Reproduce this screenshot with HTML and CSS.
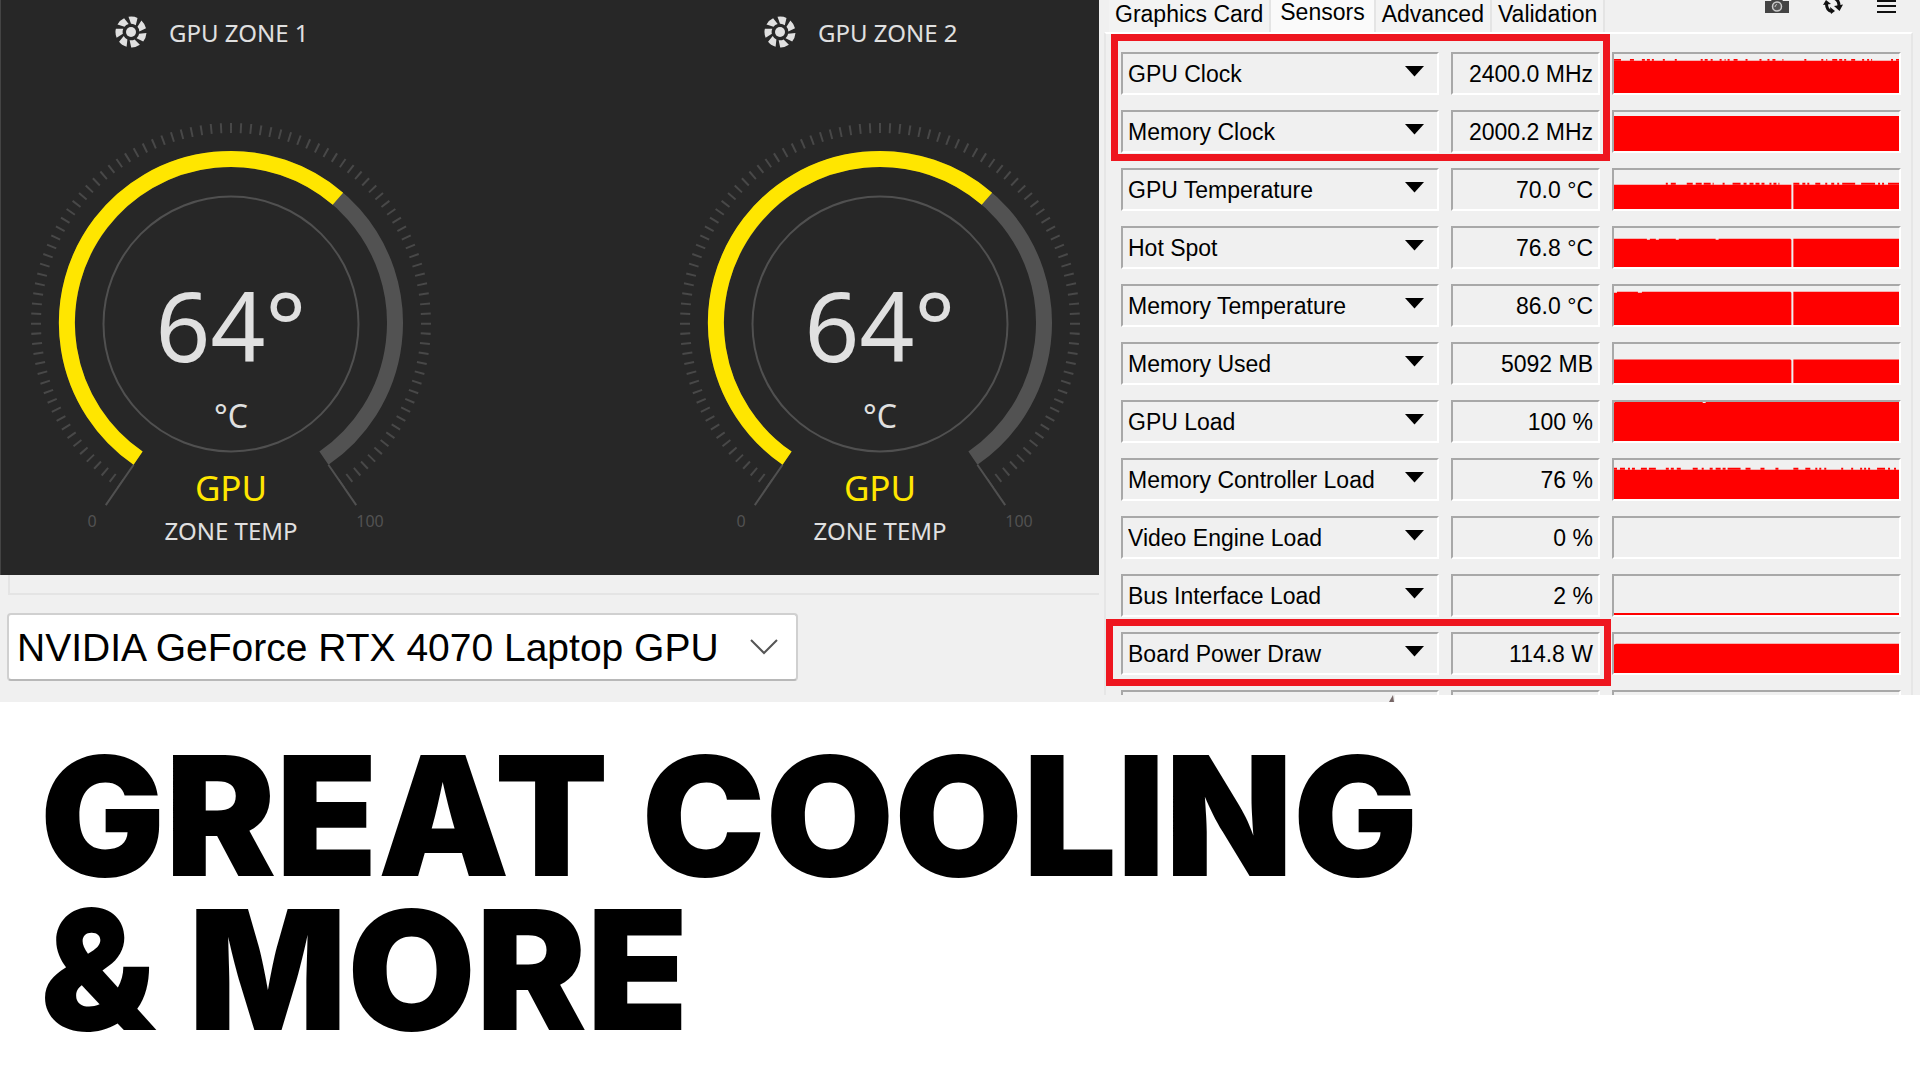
FILE: index.html
```html
<!DOCTYPE html>
<html lang="en">
<head>
<meta charset="utf-8">
<title>Great cooling &amp; more</title>
<link rel="stylesheet" href="styles.css">
</head>
<body>
<svg class="defs" aria-hidden="true">
  <symbol id="caret" viewBox="0 0 19 11"><path d="M0 0H19L9.500 10.500Z"/></symbol>
  <symbol id="fan" viewBox="-16 -16 32 32">
    <circle r="5"/>
    <g id="blades">
      <path id="blade" d="M-2.500 -15.300Q3 -16 6.500 -14L4.800 -6.800Q2.500 -8.500 0 -8.300Z"/>
      <use href="#blade" transform="rotate(51.430)"/>
      <use href="#blade" transform="rotate(102.860)"/>
      <use href="#blade" transform="rotate(154.290)"/>
      <use href="#blade" transform="rotate(205.710)"/>
      <use href="#blade" transform="rotate(257.140)"/>
      <use href="#blade" transform="rotate(308.570)"/>
    </g>
  </symbol>
  <symbol id="dial" viewBox="-231 -230 462 460">
    <path class="ticks" pathLength="1000" d="M-110.400 160.700A195 195 0 1 1 110.400 160.700"/>
    <path class="ends" d="M-97.400 141.700L-125.200 182.100M97.400 141.700L125.200 182.100"/>
    <path class="track" d="M-92.900 135.200A164 164 0 1 1 92.900 135.200"/>
    <path class="fill" d="M-92.900 135.200A164 164 0 1 1 106.900 -124.300"/>
    <circle class="inner" cy="1" r="127.500"/>
  </symbol>
</svg>

<main>
  <section class="captures">
    <div class="left">
      <div class="zones">
        <article class="zone">
          <h2><svg class="fan" aria-hidden="true"><use href="#fan"/></svg>GPU ZONE 1</h2>
          <svg class="gauge" viewBox="-231 -230 462 460">
            <use href="#dial" x="-231" y="-230" width="462" height="460"/>
            <text class="reading" y="39">64°</text>
            <text class="unit" y="105">°C</text>
            <text class="name" y="178">GPU</text>
            <text class="caption" y="217">ZONE TEMP</text>
            <text class="scale" x="-139" y="204">0</text>
            <text class="scale" x="139" y="204">100</text>
          </svg>
        </article>
        <article class="zone">
          <h2><svg class="fan" aria-hidden="true"><use href="#fan"/></svg>GPU ZONE 2</h2>
          <svg class="gauge" viewBox="-231 -230 462 460">
            <use href="#dial" x="-231" y="-230" width="462" height="460"/>
            <text class="reading" y="39">64°</text>
            <text class="unit" y="105">°C</text>
            <text class="name" y="178">GPU</text>
            <text class="caption" y="217">ZONE TEMP</text>
            <text class="scale" x="-139" y="204">0</text>
            <text class="scale" x="139" y="204">100</text>
          </svg>
        </article>
      </div>
      <div class="picker">
        <div class="group-edge"></div>
        <div class="device">
          <select aria-label="Graphics card"><option>NVIDIA GeForce RTX 4070 Laptop GPU</option></select>
          <svg class="chevron" viewBox="0 0 28 16" aria-hidden="true"><path d="M1 1L14 14L27 1"/></svg>
        </div>
      </div>
    </div>

    <div class="right">
      <div class="panel">
        <header>
          <nav>
            <button class="tab">Graphics Card</button>
            <button class="tab active">Sensors</button>
            <button class="tab">Advanced</button>
            <button class="tab">Validation</button>
          </nav>
          <div class="tools">
            <button aria-label="Screenshot"><svg width="24" height="14" viewBox="0 0 24 14"><path fill="#444" d="M0 1H6L8 -2H16L18 1H24V13H0Z"/><circle cx="12" cy="6.500" r="4.500" fill="#555" stroke="#ccc" stroke-width="1.500"/><path d="M10 7A2.500 2.500 0 0 1 12 4.500" fill="none" stroke="#ccc"/></svg></button>
            <button aria-label="Refresh"><svg width="20" height="14" viewBox="0 0 20 14"><g fill="none" stroke="#111" stroke-width="3"><path d="M3.500 4Q3.500 10.500 9 11.500"/><path d="M16 6Q16 -1 10 -2"/></g><path fill="#111" d="M0 5L3 0L8 4ZM11 6L20 4.500L16.500 11ZM7 7L12 11L8 14Z"/></svg></button>
            <button aria-label="Menu"><svg width="19" height="14" viewBox="0 0 19 14"><path stroke="#111" stroke-width="2" d="M0 1H19M0 6H19M0 12H19"/></svg></button>
          </div>
        </header>
        <div class="sensors">
          <div class="group marked clocks">
            <div class="row">
              <div class="field"><select aria-label="Sensor 1"><option>GPU Clock</option></select><svg class="caret"><use href="#caret"/></svg></div>
              <output>2400.0 MHz</output>
              <svg class="graph" viewBox="0 0 286 40" preserveAspectRatio="none"><path d="M0 7H286V40H0Z"/><path class="noise" d="M0 6H7M16 6H20M28 6H31M33 6H36M38 6H40M49 6H51M61 6H63M87 6H89M91 6H94M97 6H99M106 6H108M111 6H112M114 6H116M120 6H124M132 6H134M146 6H148M154 6H156M159 6H162M169 6H170M191 6H193M208 6H210M213 6H214M219 6H224M226 6H229M231 6H233M238 6H242M249 6H251M254 6H256M258 6H259M278 6H280M283 6H286"/></svg>
            </div>
            <div class="row">
              <div class="field"><select aria-label="Sensor 2"><option>Memory Clock</option></select><svg class="caret"><use href="#caret"/></svg></div>
              <output>2000.2 MHz</output>
              <svg class="graph" viewBox="0 0 286 40" preserveAspectRatio="none"><path d="M0 4H286V40H0Z"/></svg>
            </div>
          </div>
          <div class="row">
            <div class="field"><select aria-label="Sensor 3"><option>GPU Temperature</option></select><svg class="caret"><use href="#caret"/></svg></div>
            <output>70.0 °C</output>
            <svg class="graph" viewBox="0 0 286 40" preserveAspectRatio="none"><path d="M0 15H178V40H0ZM180 15H286V40H180Z"/><path class="noise" d="M52 14H54M57 14H62M73 14H79M82 14H88M90 14H97M99 14H100M109 14H111M119 14H127M130 14H133M136 14H140M142 14H146M148 14H151M156 14H158M160 14H163M165 14H166M180 14H186M189 14H192M194 14H196M202 14H207M212 14H214M218 14H221M224 14H226M229 14H242M248 14H262M265 14H267M269 14H271M275 14H286"/></svg>
          </div>
          <div class="row">
            <div class="field"><select aria-label="Sensor 4"><option>Hot Spot</option></select><svg class="caret"><use href="#caret"/></svg></div>
            <output>76.8 °C</output>
            <svg class="graph" viewBox="0 0 286 40" preserveAspectRatio="none"><path d="M0 11H33V12H36V11H42V12H45V11H62V12H65V11H102V12H105V11H177L178 12V40H0ZM180 11H286V40H180Z"/></svg>
          </div>
          <div class="row">
            <div class="field"><select aria-label="Sensor 5"><option>Memory Temperature</option></select><svg class="caret"><use href="#caret"/></svg></div>
            <output>86.0 °C</output>
            <svg class="graph" viewBox="0 0 286 40" preserveAspectRatio="none"><path d="M0 7H3V6H24V7H28V6H177L178 7V40H0ZM180 6H286V40H180Z"/></svg>
          </div>
          <div class="row">
            <div class="field"><select aria-label="Sensor 6"><option>Memory Used</option></select><svg class="caret"><use href="#caret"/></svg></div>
            <output>5092 MB</output>
            <svg class="graph" viewBox="0 0 286 40" preserveAspectRatio="none"><path d="M0 16H177L178 17V40H0ZM180 16H286V40H180Z"/></svg>
          </div>
          <div class="row">
            <div class="field"><select aria-label="Sensor 7"><option>GPU Load</option></select><svg class="caret"><use href="#caret"/></svg></div>
            <output>100 %</output>
            <svg class="graph" viewBox="0 0 286 40" preserveAspectRatio="none"><path d="M0 1L1 0H89V1H92V0H286V40H0Z"/></svg>
          </div>
          <div class="row">
            <div class="field"><select aria-label="Sensor 8"><option>Memory Controller Load</option></select><svg class="caret"><use href="#caret"/></svg></div>
            <output>76 %</output>
            <svg class="graph" viewBox="0 0 286 40" preserveAspectRatio="none"><path d="M0 10H286V40H0Z"/><path class="noise" d="M0 9H3M6 9H11M14 9H16M18 9H21M27 9H33M35 9H42M52 9H55M57 9H60M63 9H67M79 9H84M88 9H90M96 9H99M102 9H107M109 9H112M114 9H127M132 9H137M147 9H151M162 9H165M180 9H185M192 9H197M202 9H204M206 9H208M211 9H213M228 9H230M238 9H240M247 9H249M251 9H253M255 9H257M264 9H272M275 9H277M281 9H283"/></svg>
          </div>
          <div class="row">
            <div class="field"><select aria-label="Sensor 9"><option>Video Engine Load</option></select><svg class="caret"><use href="#caret"/></svg></div>
            <output>0 %</output>
            <svg class="graph" viewBox="0 0 286 40" preserveAspectRatio="none"></svg>
          </div>
          <div class="row">
            <div class="field"><select aria-label="Sensor 10"><option>Bus Interface Load</option></select><svg class="caret"><use href="#caret"/></svg></div>
            <output>2 %</output>
            <svg class="graph" viewBox="0 0 286 40" preserveAspectRatio="none"><path d="M0 38H286V40H0Z"/></svg>
          </div>
          <div class="group marked power">
            <div class="row">
              <div class="field"><select aria-label="Sensor 11"><option>Board Power Draw</option></select><svg class="caret"><use href="#caret"/></svg></div>
              <output>114.8 W</output>
              <svg class="graph" viewBox="0 0 286 40" preserveAspectRatio="none"><path d="M0 11L2 10H286V40H0Z"/></svg>
            </div>
          </div>
          <div class="row">
            <div class="field"></div>
            <output></output>
            <svg class="graph"></svg>
          </div>
        </div>
      </div>
      <div class="under"><svg width="6" height="7" viewBox="0 0 6 7" aria-hidden="true"><path fill="#766" d="M0 7L4 0L5 7Z"/></svg></div>
    </div>
  </section>
  <h1>GREAT COOLING<br>&amp; MORE</h1>
</main>
</body>
</html>
```

FILE: styles.css
```css
*,
*::after {
  box-sizing: border-box;
}

body {
  margin: 0;
  background: #fff;
  color: #000;
  font-family: "Liberation Sans", Arial, sans-serif;
  font-size: 23px;
  overflow-x: hidden;
}

button,
select {
  font: inherit;
  color: inherit;
  border: 0;
  border-radius: 0;
  background: none;
  padding: 0;
  margin: 0;
  appearance: none;
}

.defs {
  display: block;
  width: 0;
  height: 0;
}

.captures {
  display: grid;
  grid-template-columns: 1099fr 821fr;
}

.left,
.right {
  display: flex;
  flex-direction: column;
  min-width: 0;
}

/* Fan zones */
.zones {
  display: grid;
  grid-template-columns: minmax(0, 649fr) minmax(0, 450fr);
  height: 575px;
  background: #272727;
  box-shadow: inset 1px 0 #444;
  overflow: hidden;
}

.zone {
  width: 462px;
  color: #e0e0e0;
  font-family: "Noto Sans", sans-serif;
}

.zone h2 {
  display: flex;
  align-items: center;
  gap: 22px;
  height: 64px;
  margin: 0;
  padding-left: 115px;
  font-size: 24px;
  font-weight: 400;
}

.fan {
  width: 32px;
  height: 32px;
  fill: #e0e0e0;
}

.gauge {
  display: block;
  width: 100%;
  margin-top: 29px;
}

.ticks,
.ends,
.track,
.fill,
.inner {
  fill: none;
}

.ticks {
  stroke: #484848;
  stroke-width: 10;
  stroke-dasharray: 2 8;
  stroke-dashoffset: 1;
}

.ends,
.inner {
  stroke: #505050;
  stroke-width: 2;
}

.track {
  stroke: #525252;
  stroke-width: 16;
}

.fill {
  stroke: #ffe600;
  stroke-width: 16;
}

.gauge text {
  text-anchor: middle;
  fill: #e0e0e0;
}

.gauge .reading {
  font-size: 96px;
}

.gauge .unit {
  font-size: 32px;
}

.gauge .name {
  font-size: 35px;
  fill: #ffe600;
}

.gauge .caption {
  font-size: 24px;
}

.gauge .scale {
  font-size: 16px;
  fill: #525252;
}

/* Device picker */
.picker {
  height: 127px;
  background: #f0f0f0;
}

.group-edge {
  height: 20px;
  margin-left: 8px;
  border-left: 2px solid #e4e4e4;
  border-bottom: 2px solid #e4e4e4;
}

.device {
  position: relative;
  width: 72%;
  height: 68px;
  margin: 18px 0 0 7px;
  background: #fff;
  border: 2px solid #d0d0d0;
  border-bottom-color: #b8b8b8;
  border-radius: 4px;
}

.device select {
  width: 100%;
  height: 100%;
  padding: 0 0 0 8px;
  font-size: 39px;
}

.chevron {
  position: absolute;
  top: 24px;
  right: 18px;
  width: 28px;
  height: 16px;
  fill: none;
  stroke: #555;
  stroke-width: 2;
  pointer-events: none;
}

/* Sensor panel */
.panel {
  height: 695px;
  padding: 0 7px 0 5px;
  background: #f0f0f0;
  overflow: hidden;
}

header {
  display: flex;
  justify-content: space-between;
  height: 32px;
}

nav {
  display: flex;
  margin-left: 5px;
}

.tab {
  padding: 0 6px 4px;
  line-height: 28px;
  white-space: nowrap;
  background: #f3f3f3;
  border-right: 2px solid #e4e4e4;
}

.tab.active {
  padding: 0 9px 8px;
  line-height: 24px;
  background: #fafafa;
}

.tools {
  display: flex;
  align-items: flex-start;
  gap: 34px;
  padding-right: 17px;
}

.tools svg {
  display: block;
}

.sensors {
  display: grid;
  gap: 15px;
  padding: 18px 10px 0 15px;
  border: 2px solid #e6e6e6;
  border-top-color: #fff;
}

.group {
  position: relative;
  display: grid;
  gap: 15px;
}

.marked::after {
  content: "";
  position: absolute;
  border: 7px solid #ee161f;
  pointer-events: none;
}

.clocks::after {
  inset: -18px auto -8px -10px;
  width: 64%;
}

.power::after {
  inset: -13px auto -11px -15px;
  width: calc(64% + 6px);
}

.row {
  display: grid;
  grid-template-columns: 318fr 149fr 289fr;
  gap: 12px;
  height: 43px;
}

.field,
output,
.graph {
  min-width: 0;
  width: 100%;
  height: 43px;
  border: 2px solid #fff;
  border-top-color: #a8a8a8;
  border-left-color: #a8a8a8;
}

.field {
  position: relative;
}

.field select {
  width: 100%;
  height: 100%;
  padding-left: 5px;
}

.caret {
  position: absolute;
  top: 12px;
  right: 13px;
  width: 19px;
  height: 11px;
  pointer-events: none;
}

output {
  padding-right: 5px;
  line-height: 40px;
  text-align: right;
  white-space: nowrap;
}

.graph {
  display: block;
  fill: #f00;
}

.noise {
  fill: none;
  stroke: #f00;
  stroke-width: 2;
}

.under {
  display: flex;
  justify-content: flex-end;
  width: 36%;
  height: 7px;
  background: #f0f0f0;
}

h1 {
  margin: 0;
  padding: 37px 40px 0;
  font-family: Inter, sans-serif;
  font-size: 166px;
  font-weight: 900;
  line-height: 154px;
}
```
